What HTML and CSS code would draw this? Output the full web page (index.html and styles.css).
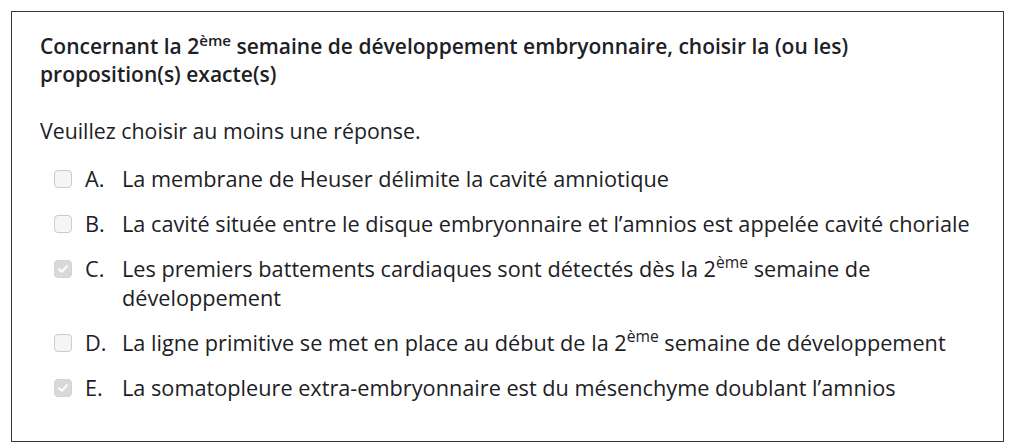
FILE: index.html
```html
<!DOCTYPE html>
<html lang="fr">
<head>
<meta charset="utf-8">
<link rel="stylesheet" href="styles.css">
</head>
<body>
<div class="page">
  <div class="question">
    <div class="qtext">Concernant la 2<sup>ème</sup> semaine de développement embryonnaire, choisir la (ou les) proposition(s) exacte(s)</div>
    <div class="prompt">Veuillez choisir au moins une réponse.</div>
    <div class="answers">
      <div class="opt"><span class="box"></span><span class="letter">A.</span><span class="label">La membrane de Heuser délimite la cavité amniotique</span></div>
      <div class="opt"><span class="box"></span><span class="letter">B.</span><span class="label">La cavité située entre le disque embryonnaire et l’amnios est appelée cavité choriale</span></div>
      <div class="opt"><span class="box checked"><svg viewBox="0 0 18 18" width="18" height="18"><path d="M4.5 9.2 L7.6 12.2 L13.5 5.8" fill="none" stroke="#fff" stroke-width="2.2" stroke-linecap="round" stroke-linejoin="round"/></svg></span><span class="letter">C.</span><span class="label">Les premiers battements cardiaques sont détectés dès la 2<sup>ème</sup> semaine de développement</span></div>
      <div class="opt"><span class="box"></span><span class="letter">D.</span><span class="label">La ligne primitive se met en place au début de la 2<sup>ème</sup> semaine de développement</span></div>
      <div class="opt"><span class="box checked"><svg viewBox="0 0 18 18" width="18" height="18"><path d="M4.5 9.2 L7.6 12.2 L13.5 5.8" fill="none" stroke="#fff" stroke-width="2.2" stroke-linecap="round" stroke-linejoin="round"/></svg></span><span class="letter">E.</span><span class="label">La somatopleure extra-embryonnaire est du mésenchyme doublant l’amnios</span></div>
    </div>
  </div>
</div>
</body>
</html>
```

FILE: styles.css
```css
html, body { margin: 0; padding: 0; background: #fff; }
body { font-family: "Open Sans", "Liberation Sans", sans-serif; color: #1d2125; }
.page { padding: 11px 14px 4px 11px; }
.question {
  border: 1px solid #2d3a46;
  box-sizing: border-box;
  height: 431px;
  padding: 20px 20px 0 28px;
}
.qtext { font-size: 21px; font-weight: 600; line-height: 28px; max-width: 860px; }
sup { font-size: 0.72em; line-height: 0; vertical-align: 0.55em; }
.prompt { font-size: 21.3px; line-height: 28px; margin-top: 29px; }
.answers { margin-top: 19px; display: flex; flex-direction: column; gap: 16px; }
.opt { display: flex; align-items: flex-start; font-size: 21.7px; line-height: 29px; padding-left: 14px; }
.box {
  flex: none; width: 18px; height: 18px; margin-top: 6px;
  border: 1px solid #cbcbcb; border-radius: 4px; background: #f5f5f5; box-sizing: border-box;
  display: flex; align-items: center; justify-content: center;
}
.box.checked { background: #d9d9d9; border-color: #d3d3d3; }
.box svg { width: 16px; height: 16px; }
.letter { flex: none; width: 37px; margin-left: 13px; }
.label { flex: 1; max-width: 850px; }
```
